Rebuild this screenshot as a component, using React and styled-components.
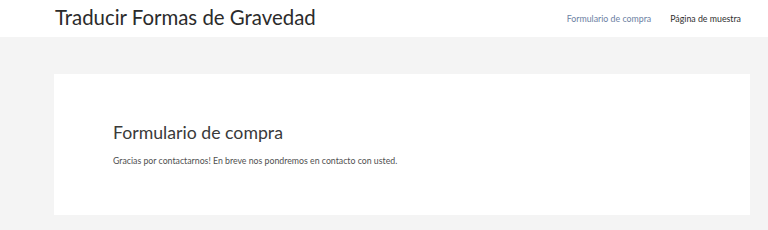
import React from "react";
import styled, { createGlobalStyle } from "styled-components";

const Global = createGlobalStyle`
  html, body { margin: 0; padding: 0; background: #f4f4f4; }
  body { font-family: Lato, "Open Sans", sans-serif; }
`;

const Header = styled.header`
  height: 37px;
  background: #ffffff;
  display: flex;
  align-items: center;
  justify-content: space-between;
  padding: 0 27px 0 55px;
  box-sizing: border-box;
`;

const SiteTitle = styled.div`
  font-size: 20.4px;
  color: #2b2b2b;
  line-height: 1;
  margin-top: -2px;
`;

const Nav = styled.nav`
  display: flex;
  gap: 19px;
  margin-top: -1px;
`;

const NavLink = styled.a`
  font-size: 8.8px;
  color: ${(p) => (p.$active ? "#6c7fa3" : "#2f2f2f")};
  text-decoration: none;
`;

const Main = styled.main`
  padding: 37px 18px 15px 54px;
`;

const Card = styled.article`
  background: #ffffff;
  height: 141px;
  box-sizing: border-box;
  padding: 48px 59px;
`;

const Heading = styled.h1`
  margin: 0;
  font-size: 17.7px;
  font-weight: 400;
  color: #3a3a3a;
  line-height: 1.2;
`;

const Text = styled.p`
  margin: 12px 0 0;
  font-size: 8.75px;
  color: #505050;
`;

export default function App() {
  return (
    <>
      <Global />
      <Header>
        <SiteTitle>Traducir Formas de Gravedad</SiteTitle>
        <Nav>
          <NavLink $active href="#">Formulario de compra</NavLink>
          <NavLink href="#">Página de muestra</NavLink>
        </Nav>
      </Header>
      <Main>
        <Card>
          <Heading>Formulario de compra</Heading>
          <Text>Gracias por contactarnos! En breve nos pondremos en contacto con usted.</Text>
        </Card>
      </Main>
    </>
  );
}
